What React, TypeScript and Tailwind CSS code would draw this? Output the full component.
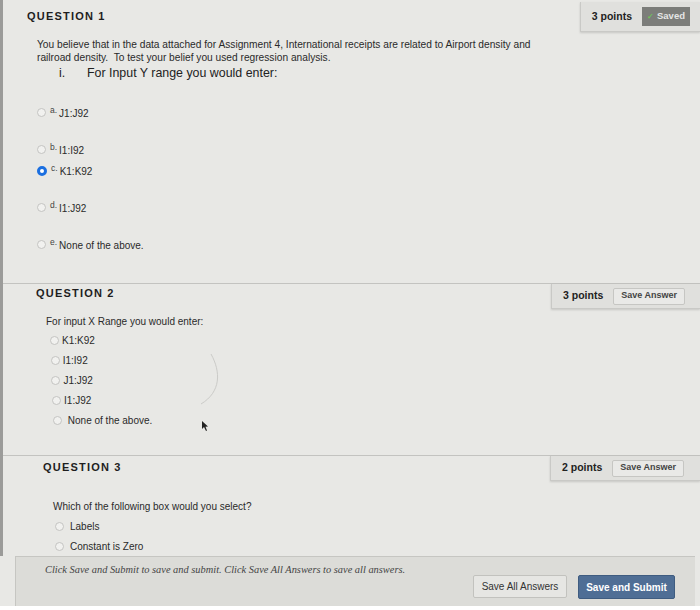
import type { ReactNode } from "react";

const sans = { fontFamily: '"Liberation Sans", Arial, sans-serif' };

function Radio({ checked = false }: { checked?: boolean }) {
  if (checked) {
    return <span className="inline-block w-[10px] h-[10px] rounded-full border-[3px] border-[#1b6fe0] bg-white shrink-0" />;
  }
  return <span className="inline-block w-[9px] h-[9px] rounded-full border border-[#c4c4c2] bg-[#f1f1ef] shrink-0" />;
}

function Points({ pts, children, box }: { pts: string; children: ReactNode; box: string }) {
  return (
    <div className={`absolute right-0 ${box} whitespace-nowrap bg-[#e0e0dd] border-l border-b border-[#c9c9c6] shadow-[0_1px_2px_rgba(0,0,0,0.15)] flex items-center gap-[10px] pl-[11px]`}>
      <span className="text-[10.5px] font-bold text-[#222]">{pts}</span>
      {children}
    </div>
  );
}

function SaveAnswer() {
  return (
    <span className="h-[17px] px-[7px] flex items-center bg-[#e9e9e7] border border-[#c6c6c3] rounded-[2px] text-[9px] font-bold text-[#444]">
      Save Answer
    </span>
  );
}

export default function App() {
  const q1 = [
    { l: "a.", t: "J1:J92", mt: "mt-[26px]" },
    { l: "b.", t: "I1:I92", mt: "mt-[25px]" },
    { l: "c.", t: "K1:K92", mt: "mt-[9px]", checked: true },
    { l: "d.", t: "I1:J92", mt: "mt-[25px]" },
    { l: "e.", t: "None of the above.", mt: "mt-[25px]" },
  ];
  const q2 = ["K1:K92", "I1:I92", "J1:J92", "I1:J92", "None of the above."];

  return (
    <div className="w-[700px] h-[610px] bg-[#e8e8e5] flex flex-col overflow-hidden text-[#222]" style={sans}>
      <div className="flex flex-1 min-h-0">
        <div className="w-[3px] bg-[#9b9b99] shrink-0" />
        <div className="flex-1 flex flex-col min-w-0">
          {/* Question 1 */}
          <section className="relative h-[283px] pl-[24px] pt-[8px]">
            <Points pts="3 points" box="top-[2px] h-[30px] pr-[10px]">
              <span className="h-[19px] px-[5px] flex items-center gap-[3px] bg-[#7c7d7a] text-[9.5px] font-bold text-[#e6e6e6]">
                <span className="text-[#6fc35a] text-[8px]">✓</span>Saved
              </span>
            </Points>
            <h2 className="text-[11px] font-bold tracking-[1.2px] text-[#1e1e1e]">QUESTION 1</h2>
            <div className="pl-[10px] mt-[13px] text-[10.2px] leading-[13px] w-[520px] text-[#2a2a2a]">
              You believe that in the data attached for Assignment 4, International receipts are related to Airport density and railroad density.&nbsp; To test your belief you used regression analysis.
            </div>
            <div className="flex text-[12.4px] leading-[15px] mt-[2px] text-[#222]">
              <span className="w-[60px] pl-[32px]">i.</span>
              <span>For Input Y range you would enter:</span>
            </div>
            <div className="flex flex-col pl-[10px]">
              {q1.map((o) => (
                <div key={o.l} className={`flex items-center ${o.mt} h-[12px]`}>
                  <Radio checked={o.checked} />
                  <span className="text-[8.5px] ml-[4px] -mt-[5px] text-[#444]">{o.l}</span>
                  <span className="text-[10px] ml-[2px] mt-[1px] text-[#2a2a2a]">{o.t}</span>
                </div>
              ))}
            </div>
          </section>

          {/* Question 2 */}
          <section className="relative h-[172px] border-t border-[#c3c3c0] pl-[33px] pt-[1px]">
            <Points pts="3 points" box="top-0 h-[25px] pr-[15px]">
              <SaveAnswer />
            </Points>
            <h2 className="text-[11px] font-bold tracking-[1.2px] text-[#1e1e1e]">QUESTION 2</h2>
            <div className="pl-[10px] mt-[12px] text-[10px] text-[#2a2a2a]">For input X Range you would enter:</div>
            <div className="flex flex-col gap-[8px] mt-[6px]">
              {q2.map((t, i) => (
                <div key={t} className="flex items-center h-[12px] gap-[3px]" style={{ paddingLeft: 14 + i * 0.7 }}>
                  <Radio />
                  <span className="text-[10px] text-[#2a2a2a]" style={{ marginLeft: i === 4 ? 3 : 0 }}>{t}</span>
                </div>
              ))}
            </div>
            {/* smudge arc and pointer */}
            <svg className="absolute left-[178px] top-[68px]" width="60" height="60" viewBox="0 0 60 60">
              <path d="M30 2 C 40 20, 40 40, 20 52" fill="none" stroke="#cbcbc8" strokeWidth="1" />
            </svg>
            <svg className="absolute left-[198px] top-[136px]" width="8" height="12" viewBox="0 0 8 12">
              <path d="M1 1 L1 9 L3 7 L5 11 L6 10.5 L4.5 6.8 L7 6.5 Z" fill="#222" />
            </svg>
          </section>

          {/* Question 3 */}
          <section className="relative flex-1 border-t border-[#c3c3c0] pl-[40px] pt-[3px]">
            <Points pts="2 points" box="top-0 h-[25px] pr-[16px]">
              <SaveAnswer />
            </Points>
            <h2 className="text-[11px] font-bold tracking-[1.2px] text-[#1e1e1e]">QUESTION 3</h2>
            <div className="pl-[10px] mt-[23px] text-[10px] text-[#2a2a2a]">Which of the following box would you select?</div>
            <div className="flex flex-col gap-[8px] mt-[7px] pl-[12px]">
              {["Labels", "Constant is Zero"].map((t) => (
                <div key={t} className="flex items-center h-[12px] gap-[6px]">
                  <Radio />
                  <span className="text-[10px] text-[#2a2a2a]">{t}</span>
                </div>
              ))}
            </div>
          </section>
        </div>
      </div>

      {/* submit bar */}
      <div className="h-[50px] ml-[15px] mr-[5px] bg-[#dcdcd8] border-t border-l border-[#c6c6c2] relative shrink-0">
        <p className="absolute left-[29px] top-[5px] text-[10.4px] italic text-[#444]" style={{ fontFamily: '"Liberation Serif", Georgia, serif' }}>
          Click Save and Submit to save and submit. Click Save All Answers to save all answers.
        </p>
        <div className="absolute right-[20px] top-[18px] flex gap-[11px]">
          <span className="w-[94px] h-[23px] flex items-center justify-center bg-[#e6e6e3] border border-[#c2c2be] rounded-[2px] text-[10px] text-[#333]">
            Save All Answers
          </span>
          <span className="w-[97px] h-[24px] flex items-center justify-center bg-[#4f6e95] border border-[#3f5c80] rounded-[2px] text-[10px] font-bold text-white">
            Save and Submit
          </span>
        </div>
      </div>
      <div className="h-[4px] bg-white shrink-0" />
    </div>
  );
}
